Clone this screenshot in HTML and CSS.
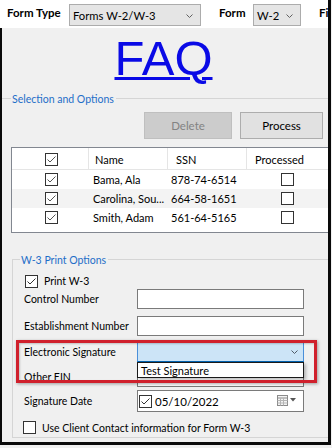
FILE: index.html
```html
<!DOCTYPE html>
<html>
<head>
<meta charset="utf-8">
<link rel="stylesheet" href="styles.css">
</head>
<body>
<div class="frame">
  <div class="topbar">
    <span class="tb-label tb-type">Form Type</span>
    <div class="combo combo-type"><span>Forms W-2/W-3</span><svg class="chev" width="7" height="4" viewBox="0 0 7 4"><polyline points="0.5,0.5 3.5,3.5 6.5,0.5" fill="none" stroke="#606060" stroke-width="1"/></svg></div>
    <span class="tb-label tb-form">Form</span>
    <div class="combo combo-form"><span>W-2</span><svg class="chev" width="7" height="4" viewBox="0 0 7 4"><polyline points="0.5,0.5 3.5,3.5 6.5,0.5" fill="none" stroke="#606060" stroke-width="1"/></svg></div>
    <span class="tb-label tb-fi">Fi</span>
  </div>
  <div class="main">
    <div class="faq"><a class="faq-link">FAQ</a></div>

    <div class="ghead ghead-sel"><span class="gl gl-left-sel"></span><span class="gtitle">Selection and Options</span><span class="gl gl-right"></span></div>

    <div class="buttons">
      <div class="btn btn-disabled">Delete</div>
      <div class="btn btn-process">Process</div>
    </div>

    <div class="list">
      <div class="lrow lhead">
        <div class="c c-chk"><span class="cb checked"><svg width="11" height="11" viewBox="0 0 11 11"><polyline points="1.5,5.5 4,8 9.5,2.5" fill="none" stroke="#555" stroke-width="1"/></svg></span></div>
        <div class="c c-name">Name</div>
        <div class="c c-ssn">SSN</div>
        <div class="c c-proc">Processed</div>
      </div>
      <div class="lrow">
        <div class="c c-chk"><span class="cb checked"><svg width="11" height="11" viewBox="0 0 11 11"><polyline points="1.5,5.5 4,8 9.5,2.5" fill="none" stroke="#555" stroke-width="1"/></svg></span></div>
        <div class="c c-name">Bama, Ala</div>
        <div class="c c-ssn">878-74-6514</div>
        <div class="c c-proc"><span class="cb"></span></div>
      </div>
      <div class="lrow alt">
        <div class="c c-chk"><span class="cb checked"><svg width="11" height="11" viewBox="0 0 11 11"><polyline points="1.5,5.5 4,8 9.5,2.5" fill="none" stroke="#555" stroke-width="1"/></svg></span></div>
        <div class="c c-name">Carolina, Sou...</div>
        <div class="c c-ssn">664-58-1651</div>
        <div class="c c-proc"><span class="cb"></span></div>
      </div>
      <div class="lrow">
        <div class="c c-chk"><span class="cb checked"><svg width="11" height="11" viewBox="0 0 11 11"><polyline points="1.5,5.5 4,8 9.5,2.5" fill="none" stroke="#555" stroke-width="1"/></svg></span></div>
        <div class="c c-name">Smith, Adam</div>
        <div class="c c-ssn">561-64-5165</div>
        <div class="c c-proc"><span class="cb"></span></div>
      </div>
    </div>

    <div class="ghead ghead-w3"><span class="gl gl-left-w3"></span><span class="gtitle">W-3 Print Options</span><span class="gl gl-right"></span></div>
    <div class="w3-body">
      <div class="row row-print">
        <span class="cb checked"><svg width="11" height="11" viewBox="0 0 11 11"><polyline points="1.5,5.5 4,8 9.5,2.5" fill="none" stroke="#333" stroke-width="1"/></svg></span>
        <span class="cb-text">Print W-3</span>
      </div>
      <div class="row row-control">
        <span class="lbl">Control Number</span>
        <div class="field"></div>
      </div>
      <div class="row row-estab">
        <span class="lbl">Establishment Number</span>
        <div class="field"></div>
      </div>
      <div class="row row-elec">
        <span class="lbl">Electronic Signature</span>
        <div class="field field-combo">
          <svg class="chev" width="7" height="4" viewBox="0 0 7 4"><polyline points="0.5,0.5 3.5,3.5 6.5,0.5" fill="none" stroke="#505a66" stroke-width="1"/></svg>
          <div class="dropdown">Test Signature</div>
        </div>
      </div>
      <div class="row row-other">
        <span class="lbl">Other EIN</span>
        <div class="field"></div>
      </div>
      <div class="row row-date">
        <span class="lbl">Signature Date</span>
        <div class="field field-date">
          <span class="cb checked"><svg width="11" height="11" viewBox="0 0 11 11"><polyline points="1.5,5.5 4,8 9.5,2.5" fill="none" stroke="#333" stroke-width="1"/></svg></span>
          <span class="date-text">05/10/2022</span>
          <svg class="cal" width="20" height="11" viewBox="0 0 20 11">
            <rect x="0.5" y="0.5" width="10" height="10" fill="#f4f4f4" stroke="#8a8a8a"/>
            <line x1="0.5" y1="3" x2="10.5" y2="3" stroke="#8a8a8a"/>
            <line x1="0.5" y1="5.5" x2="10.5" y2="5.5" stroke="#b5b5b5"/>
            <line x1="0.5" y1="8" x2="10.5" y2="8" stroke="#b5b5b5"/>
            <line x1="3.5" y1="3" x2="3.5" y2="10.5" stroke="#b5b5b5"/>
            <line x1="6.5" y1="3" x2="6.5" y2="10.5" stroke="#b5b5b5"/>
            <polygon points="13,3 19,3 16,6.5" fill="#555"/>
          </svg>
        </div>
      </div>
      <div class="row row-use">
        <span class="cb"></span>
        <span class="cb-text">Use Client Contact information for Form W-3</span>
      </div>
    </div>

    <div class="highlight"></div>
  </div>
</div>
</body>
</html>
```
FILE: styles.css
```css
* { box-sizing: border-box; }

body {
  margin: 0;
  background: #f0f0f0;
  font-family: Lato, "Segoe UI", "Liberation Sans", sans-serif;
  font-size: 11px;
  color: #000;
}

.frame {
  width: 331px;
  height: 445px;
  border-right: 3px solid #0a0a0a;
  border-bottom: 3px solid #0a0a0a;
  display: flex;
  flex-direction: column;
}

/* Top bar */
.topbar {
  height: 28px;
  flex: none;
  background: #fff;
  display: flex;
  align-items: center;
  padding-left: 7px;
}
.tb-label {
  font-weight: 700;
  font-size: 11.5px;
  padding-bottom: 3px;
  white-space: nowrap;
  overflow: hidden;
}
.tb-type { width: 62px; }
.tb-form { width: 34px; margin-left: 18px; }
.tb-fi { width: 9px; margin-left: 18px; }

.combo {
  height: 22px;
  margin-top: 2px;
  background: #e5e5e5;
  border: 1px solid #acacac;
  display: flex;
  align-items: center;
  justify-content: space-between;
  padding: 0 7px 0 3px;
  font-size: 11.25px;
}
.combo span { padding-top: 1px; }
.combo-type { width: 132px; }
.combo-form { width: 48px; }
.combo .chev { margin-top: 1px; }

/* Main area */
.main {
  flex: 1;
  background: #f0f0f0;
  border-left: 2px solid #0a0a0a;
  position: relative;
  overflow: hidden;
}

.faq {
  margin-top: 6px;
  height: 49px;
  display: flex;
  justify-content: center;
  padding-right: 3px;
}
.faq-link {
  font-family: "Liberation Sans", Arial, sans-serif;
  font-size: 49px;
  line-height: 49px;
  color: #0a0ae6;
  text-decoration: underline;
  text-decoration-thickness: 3px;
  text-underline-offset: 2px;
}

/* Group headers */
.ghead {
  height: 13px;
  display: flex;
  align-items: center;
}
.ghead-sel { margin-top: 9px; }
.gl { height: 1px; background: #d5d5d5; }
.gl-left-sel { width: 9px; }
.gl-left-w3 { width: 8px; margin-left: 10px; }
.gl-right { flex: 1; }
.gtitle {
  color: #1e6ec8;
  padding: 0 2px 0 1px;
  font-size: 10.5px;
  white-space: nowrap;
}

/* Buttons */
.buttons {
  margin-top: 7px;
  height: 27px;
  display: flex;
  justify-content: flex-end;
  gap: 8px;
  padding-right: 5px;
}
.btn {
  height: 27px;
  display: flex;
  align-items: center;
  justify-content: center;
  font-size: 11.5px;
}
.btn-disabled {
  width: 88px;
  background: #cccccc;
  border: 1px solid #bfbfbf;
  color: #838383;
}
.btn-process {
  width: 83px;
  background: #e1e1e1;
  border: 1px solid #adadad;
}

/* List */
.list {
  margin-top: 8px;
  margin-left: 9px;
  width: 330px;
  height: 86px;
  border: 1px solid #828790;
  background: #fff;
}
.lrow {
  display: flex;
  height: 19px;
}
.lrow.lhead {
  height: 22px;
  border-bottom: 1px solid #e5e5e5;
}
.lrow.alt { background: #f3f3f3; }
.c {
  display: flex;
  align-items: center;
  white-space: nowrap;
}
.c-chk { width: 77px; justify-content: center; padding-left: 2px; }
.c-name { width: 79px; padding-left: 4px; }
.c-ssn { width: 79px; padding-left: 3px; }
.c-proc { width: 93px; padding-left: 34px; }
.lhead .c { border-right: 1px solid #e5e5e5; padding-top: 1px; }
.lhead .c-name { padding-left: 6px; }
.lhead .c-ssn { padding-left: 8px; }
.lhead .c-proc { padding-left: 8px; }

.cb {
  width: 13px;
  height: 13px;
  flex: none;
  border: 1px solid #333;
  background: #fff;
  display: flex;
  align-items: center;
  justify-content: center;
}
.cb svg { display: block; }

/* W-3 group */
.ghead-w3 { margin-top: 20px; margin-bottom: -7px; }
.w3-body {
  margin-left: 10px;
  border-left: 1px solid #d5d5d5;
  border-bottom: 1px solid #d5d5d5;
  padding-bottom: 2px;
  display: flex;
  flex-direction: column;
  font-size: 10.5px;
}
.row {
  display: flex;
  align-items: center;
  height: 20px;
  padding-left: 11px;
}
.row-print { margin-top: 15px; height: 14px; padding-left: 12px; }
.row-control { margin-top: 1px; }
.row-estab { margin-top: 7px; }
.row-elec { margin-top: 6px; }
.row-other { margin-top: 5px; }
.row-date { margin-top: 3px; height: 22px; }
.row-use { margin-top: 8px; height: 15px; padding-left: 10px; }

.cb-text { margin-left: 6px; white-space: nowrap; }

.lbl { width: 113px; flex: none; white-space: nowrap; }

.field {
  width: 167px;
  height: 20px;
  background: #fff;
  border: 1px solid #7a7a7a;
}
.field-combo {
  position: relative;
  background: #cce4f7;
  border: 1px solid #4a8fd9;
  border-bottom-color: #0063b1;
  display: flex;
  align-items: center;
  justify-content: flex-end;
  padding-right: 5px;
}
.dropdown {
  position: absolute;
  left: -1px;
  top: 19px;
  width: 167px;
  height: 16px;
  background: #fff;
  border: 1px solid #1a1a1a;
  padding-left: 3px;
  display: flex;
  align-items: center;
  box-shadow: 2px 2px 3px rgba(0, 0, 0, 0.25);
  z-index: 2;
  font-size: 11px;
}

.field-date {
  height: 22px;
  display: flex;
  align-items: center;
  padding-left: 1px;
  font-size: 11.5px;
}
.date-text { margin-left: 3px; }
.cal { margin-left: auto; margin-right: 6px; margin-top: -2px; }

/* Annotation overlay */
.highlight {
  position: absolute;
  left: 14px;
  top: 312px;
  width: 301px;
  height: 43px;
  border: 3px solid #d0202c;
  box-shadow: 1px 1px 3px rgba(0, 0, 0, 0.35), inset 1px 1px 2px rgba(0, 0, 0, 0.2);
  z-index: 3;
}
```
